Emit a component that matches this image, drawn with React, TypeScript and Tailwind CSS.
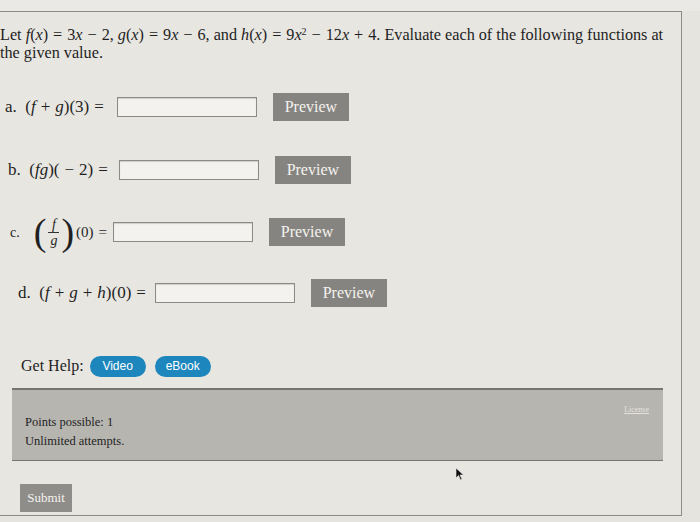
import React from 'react'

const V = ({ children }: { children: React.ReactNode }) => <span className="italic">{children}</span>
const Op = ({ children }: { children: React.ReactNode }) => <span className="mx-[5px]">{children}</span>

function Answer({ className = '' }: { className?: string }) {
  return <div className={`h-[20px] w-[140px] border border-[#8c8a86] bg-[#f3f2ee] shadow-[inset_0_1px_1px_rgba(0,0,0,0.15)] ${className}`} />
}

function Preview() {
  return (
    <button className="ml-[16px] h-[28px] w-[76px] bg-[#868480] font-['Liberation_Serif',serif] text-[16px] text-[#f4f3ef]">
      Preview
    </button>
  )
}

export default function App() {
  return (
    <div className="relative h-[522px] w-[700px] overflow-hidden bg-[#e6e4df] font-['Liberation_Serif','Times_New_Roman',serif] text-[#1f1f1f]">
      <div className="h-[11px] bg-[#ebe9e5]" />
      <div className="mr-[18px] h-[505px] border-t border-r border-b border-[#8d8b86] bg-[#e8e6e1]">
        <p className="pt-[14px] text-[16.2px] leading-[18px]">
          Let <V>f</V>(<V>x</V>)<Op>=</Op>3<V>x</V>
          <Op>−</Op>2, <V>g</V>(<V>x</V>)<Op>=</Op>9<V>x</V>
          <Op>−</Op>6, and <V>h</V>(<V>x</V>)<Op>=</Op>9<V>x</V>
          <sup className="text-[10px]">2</sup>
          <Op>−</Op>12<V>x</V>
          <Op>+</Op>4. Evaluate each of the following functions at
          <br />
          the given value.
        </p>

        <div className="mt-[31px] flex h-[28px] items-center pl-[5px] text-[17px]">
          <span>
            a.&nbsp; (<V>f</V>
            <Op>+</Op>
            <V>g</V>)(3)<Op>=</Op>
          </span>
          <Answer className="ml-[8px]" />
          <Preview />
        </div>

        <div className="mt-[35px] flex h-[28px] items-center pl-[8px] text-[17px]">
          <span>
            b.&nbsp; (<V>fg</V>)(<Op>−</Op>2)<Op>=</Op>
          </span>
          <Answer className="ml-[6px]" />
          <Preview />
        </div>

        <div className="mt-[34px] flex h-[28px] items-center pl-[10px] text-[16px]">
          <span className="text-[14px]">c.</span>
          <span className="ml-[14px] flex items-center">
            <span className="text-[38px] leading-none font-light">(</span>
            <span className="mx-[2px] flex flex-col items-center text-[14px] leading-[15px]">
              <V>f</V>
              <span className="h-px w-[11px] bg-[#333]" />
              <V>g</V>
            </span>
            <span className="text-[38px] leading-none font-light">)</span>
          </span>
          <span className="ml-[2px] text-[15px]">
            (0)<Op>=</Op>
          </span>
          <Answer className="ml-[1px] w-[138px]" />
          <Preview />
        </div>

        <div className="mt-[33px] flex h-[28px] items-center pl-[18px] text-[17px]">
          <span>
            d.&nbsp; (<V>f</V>
            <Op>+</Op>
            <V>g</V>
            <Op>+</Op>
            <V>h</V>)(0)<Op>=</Op>
          </span>
          <Answer className="ml-[4px] w-[136px]" />
          <Preview />
        </div>

        <div className="mt-[47px] flex items-center pl-[21px] text-[16px]">
          <span>Get Help:</span>
          <button className="ml-[6px] h-[21px] w-[56px] rounded-full bg-[#1c86bd] font-['Liberation_Sans',Arial,sans-serif] text-[12px] text-white">
            Video
          </button>
          <button className="ml-[9px] h-[21px] w-[56px] rounded-full bg-[#1c86bd] font-['Liberation_Sans',Arial,sans-serif] text-[12px] text-white">
            eBook
          </button>
        </div>

        <div className="relative mt-[10px] mr-[18px] ml-[12px] h-[73px] border-t-2 border-b border-[#77756f] bg-[#b7b5b0] pt-[23px] pl-[13px] text-[12.5px] leading-[19px]">
          <span className="absolute top-[10px] right-[14px] text-[8px] text-[#e4e2de] underline">License</span>
          <div>Points possible: 1</div>
          <div>Unlimited attempts.</div>
        </div>

        <button className="mt-[23px] ml-[20px] h-[28px] w-[52px] bg-[#8f8d89] font-['Liberation_Serif',serif] text-[13px] text-[#f4f3ef]">
          Submit
        </button>
      </div>

      <svg className="absolute top-[467px] left-[455px]" width="10" height="14" viewBox="0 0 10 14">
        <path d="M1 1 L1 11 L3.5 8.5 L5.5 13 L7 12.3 L5 8 L8.5 8 Z" fill="#111" stroke="#eee" strokeWidth="0.6" />
      </svg>
    </div>
  )
}
